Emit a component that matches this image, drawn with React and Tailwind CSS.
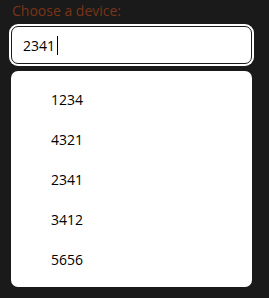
import React from "react";

const devices = ["1234", "4321", "2341", "3412", "5656"];

const App = () => {
  const value = "2341";

  return (
    <div
      className="min-h-screen w-full bg-[#1a1a1a] px-[11px] pt-[1px]"
      style={{ fontFamily: "'Open Sans', 'Noto Sans', sans-serif" }}
    >
      <label className="block pl-[1px] text-[14px] leading-[20px] text-[#7a3417]">
        Choose a device:
      </label>

      {/* Input (focused, with caret) */}
      <div className="mt-[5px] flex h-[38px] w-[241px] items-center rounded-[7px] border border-[#1a1a1a] bg-white px-[11px] text-[14px] text-black ring-2 ring-white">
        <span>{value}</span>
        <span className="ml-[2px] h-[19px] w-[1px] bg-black" />
      </div>

      {/* Options */}
      <ul className="mt-[7px] w-[241px] rounded-[7px] bg-white py-[8px] pl-[40px] text-[14px] text-black">
        {devices.map((d) => (
          <li key={d} className="flex h-[40px] items-center">
            {d}
          </li>
        ))}
      </ul>
    </div>
  );
};

export default App;
